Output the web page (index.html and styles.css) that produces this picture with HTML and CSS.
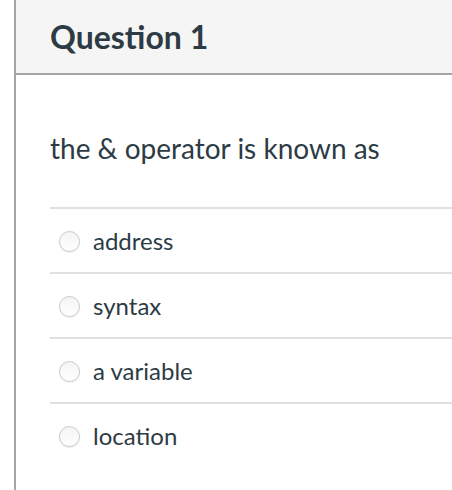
FILE: index.html
```html
<!DOCTYPE html>
<html lang="en">
<head>
    <meta charset="UTF-8">
    <title>Question 1</title>
    <link rel="stylesheet" href="styles.css">
</head>
<body>
    <div class="question">
        <div class="header">
            <h2>Question 1</h2>
        </div>
        <div class="content">
            <p class="text">the &amp; operator is known as</p>
            <div class="answers">
                <label class="answer"><span class="radio"></span>address</label>
                <label class="answer"><span class="radio"></span>syntax</label>
                <label class="answer"><span class="radio"></span>a variable</label>
                <label class="answer"><span class="radio"></span>location</label>
            </div>
        </div>
    </div>
</body>
</html>
```

FILE: styles.css
```css
body {
    margin: 0;
    font-family: Lato, "Open Sans", sans-serif;
    color: #2d3b45;
    background-color: white;
}
.question {
    margin-left: 14px;
    min-height: 490px;
    border-left: 2px solid #a5a5a5;
}
.header {
    display: flex;
    align-items: center;
    height: 73px;
    padding-left: 34px;
    background-color: #f5f5f5;
    border-bottom: 2px solid #a5a5a5;
}
.header h2 {
    margin: 0;
    font-size: 32px;
    font-weight: bold;
}
.content {
    padding-left: 34px;
}
.text {
    margin: 0;
    padding: 56px 0 42px;
    font-size: 28px;
    line-height: 34px;
}
.answer {
    display: flex;
    align-items: center;
    height: 63px;
    border-top: 2px solid #e0e0e0;
    font-size: 24px;
}
.radio {
    width: 19px;
    height: 19px;
    margin: 2px 13px 0 9px;
    border: 1px solid #c9c9c9;
    border-radius: 50%;
    background: linear-gradient(#f4f4f4, #ffffff);
    box-shadow: 0 1px 1px rgba(0, 0, 0, 0.08);
}
```
